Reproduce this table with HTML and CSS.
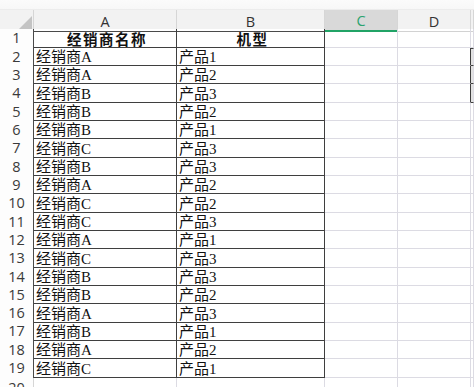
FILE: index.html
```html
<!DOCTYPE html>
<html lang="zh">
<head>
<meta charset="utf-8">
<link rel="stylesheet" href="styles.css">
</head>
<body>
<div class="sheet">
  <div class="row hdr">
    <div class="c corner"><svg width="13" height="13" viewBox="0 0 13 13"><polygon points="13,0 13,13 0,13" fill="#c4c4c4"/></svg></div>
    <div class="c ch dk-b">A</div>
    <div class="c ch dk-b">B</div>
    <div class="c ch sel">C</div>
    <div class="c ch">D</div>
    <div class="c ch"></div>
  </div>
  <div class="row"><div class="c rh dk-r">1</div><div class="c a dk th">经销商名称</div><div class="c a dk th">机型</div><div class="c"></div><div class="c"></div><div class="c"></div></div>
  <div class="row"><div class="c rh dk-r">2</div><div class="c a dk">经销商A</div><div class="c a dk">产品1</div><div class="c"></div><div class="c dk-r"></div><div class="c e dk-b"></div></div>
  <div class="row"><div class="c rh dk-r">3</div><div class="c a dk">经销商A</div><div class="c a dk">产品2</div><div class="c"></div><div class="c dk-r"></div><div class="c e dk-b"></div></div>
  <div class="row"><div class="c rh dk-r">4</div><div class="c a dk">经销商B</div><div class="c a dk">产品3</div><div class="c"></div><div class="c dk-r"></div><div class="c e dk-b"></div></div>
  <div class="row"><div class="c rh dk-r">5</div><div class="c a dk">经销商B</div><div class="c a dk">产品2</div><div class="c"></div><div class="c"></div><div class="c"></div></div>
  <div class="row"><div class="c rh dk-r">6</div><div class="c a dk">经销商B</div><div class="c a dk">产品1</div><div class="c"></div><div class="c"></div><div class="c"></div></div>
  <div class="row"><div class="c rh dk-r">7</div><div class="c a dk">经销商C</div><div class="c a dk">产品3</div><div class="c"></div><div class="c"></div><div class="c"></div></div>
  <div class="row"><div class="c rh dk-r">8</div><div class="c a dk">经销商B</div><div class="c a dk">产品3</div><div class="c"></div><div class="c"></div><div class="c"></div></div>
  <div class="row"><div class="c rh dk-r">9</div><div class="c a dk">经销商A</div><div class="c a dk">产品2</div><div class="c"></div><div class="c"></div><div class="c"></div></div>
  <div class="row"><div class="c rh dk-r">10</div><div class="c a dk">经销商C</div><div class="c a dk">产品2</div><div class="c"></div><div class="c"></div><div class="c"></div></div>
  <div class="row"><div class="c rh dk-r">11</div><div class="c a dk">经销商C</div><div class="c a dk">产品3</div><div class="c"></div><div class="c"></div><div class="c"></div></div>
  <div class="row"><div class="c rh dk-r">12</div><div class="c a dk">经销商A</div><div class="c a dk">产品1</div><div class="c"></div><div class="c"></div><div class="c"></div></div>
  <div class="row"><div class="c rh dk-r">13</div><div class="c a dk">经销商C</div><div class="c a dk">产品3</div><div class="c"></div><div class="c"></div><div class="c"></div></div>
  <div class="row"><div class="c rh dk-r">14</div><div class="c a dk">经销商B</div><div class="c a dk">产品3</div><div class="c"></div><div class="c"></div><div class="c"></div></div>
  <div class="row"><div class="c rh dk-r">15</div><div class="c a dk">经销商B</div><div class="c a dk">产品2</div><div class="c"></div><div class="c"></div><div class="c"></div></div>
  <div class="row"><div class="c rh dk-r">16</div><div class="c a dk">经销商A</div><div class="c a dk">产品3</div><div class="c"></div><div class="c"></div><div class="c"></div></div>
  <div class="row"><div class="c rh dk-r">17</div><div class="c a dk">经销商B</div><div class="c a dk">产品1</div><div class="c"></div><div class="c"></div><div class="c"></div></div>
  <div class="row"><div class="c rh dk-r">18</div><div class="c a dk">经销商A</div><div class="c a dk">产品2</div><div class="c"></div><div class="c"></div><div class="c"></div></div>
  <div class="row"><div class="c rh dk-r">19</div><div class="c a dk">经销商C</div><div class="c a dk">产品1</div><div class="c"></div><div class="c"></div><div class="c"></div></div>
  <div class="row last"><div class="c rh">20</div><div class="c"></div><div class="c"></div><div class="c"></div><div class="c"></div><div class="c"></div></div>
</div>
</body>
</html>
```
FILE: styles.css
```css
html, body {
  margin: 0;
  padding: 0;
  background: #ffffff;
  overflow: hidden;
}
body {
  width: 474px;
  height: 387px;
}
.sheet {
  padding-top: 9px;
  background: linear-gradient(#fbfbfb, #f7f7f7) top / 100% 9px no-repeat;
}
.row {
  display: grid;
  grid-template-columns: 34px 143px 148px 73px 73px 1fr;
  height: 18.33px;
}
.row.hdr {
  height: 20.33px;
  background: #f2f2f2;
  border-top: 1px solid #ececec;
  box-sizing: border-box;
}
.c {
  box-sizing: border-box;
  border-right: 1px solid #dcdbe3;
  border-bottom: 1px solid #dcdbe3;
  display: flex;
  align-items: flex-end;
  white-space: nowrap;
  min-width: 0;
}
.hdr .c {
  border-right: 1px solid #d6d6d6;
  border-bottom: 1px solid #d2d2d2;
  align-items: center;
}
.corner {
  justify-content: flex-end;
  padding: 0 1px 2px 0;
  align-items: flex-end !important;
}
.ch {
  justify-content: center;
  font-family: "Open Sans", "Noto Sans", sans-serif;
  font-size: 14.5px;
  color: #333333;
  padding-top: 1px;
}
.hdr .sel {
  background: #d9d9d9;
  color: #2aa36e;
  border-bottom: 2px solid #21a366;
}
.hdr .dk-b {
  border-bottom: 1.5px solid #4a4a4a;
}
.rh {
  justify-content: center;
  align-items: center;
  font-family: "Open Sans", "Noto Sans", sans-serif;
  font-size: 14.5px;
  color: #3a3a3a;
  background: #fdfdfd;
  border-right: 1px solid #d6d6d6;
  border-bottom: none;
  line-height: 1;
}
.last .rh {
  align-items: flex-start;
  padding-top: 3px;
}
.rh.dk-r {
  border-right: 1.5px solid #4a4a4a;
}
.a {
  font-family: "Liberation Serif", "Noto Sans CJK SC", serif;
  font-size: 15px;
  color: #111111;
  padding-left: 2px;
  line-height: 16px;
}
.dk {
  border-right: 1.5px solid #3f3f3f;
  border-bottom: 1.5px solid #3f3f3f;
}
.th {
  justify-content: center;
  align-items: flex-end;
  font-weight: bold;
  letter-spacing: 1.5px;
  font-family: "Noto Sans CJK SC", sans-serif;
  font-size: 14.5px;
  line-height: 15px;
  padding-left: 4px;
  padding-bottom: 1px;
}
.dk-r {
  border-right: 1.5px solid #3f3f3f;
}
.e {
  background: #e2e2e2;
}
.e.dk-b {
  border-bottom: 1.5px solid #3f3f3f;
}
.row:nth-child(3) .e {
  border-top: 1.5px solid #3f3f3f;
}
```
